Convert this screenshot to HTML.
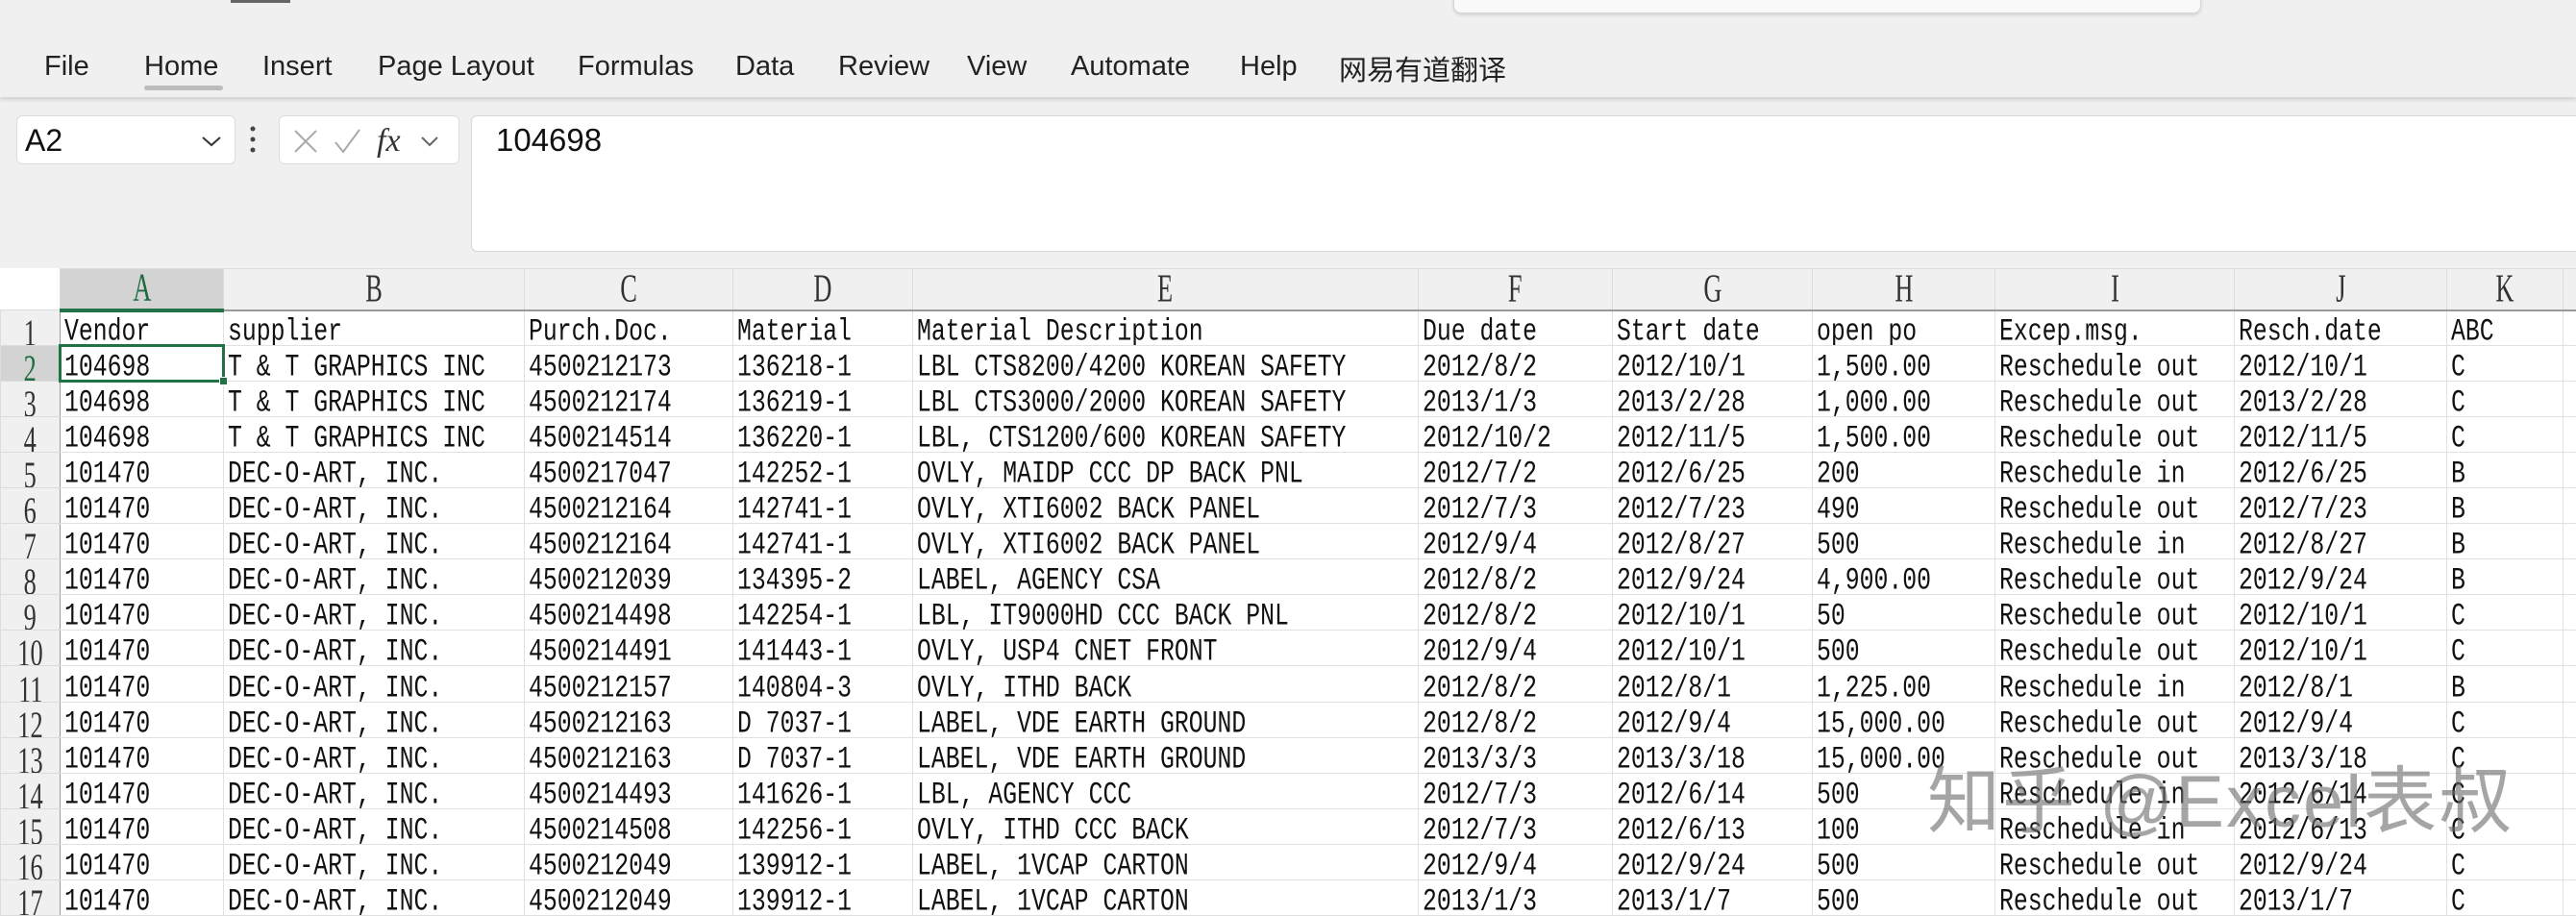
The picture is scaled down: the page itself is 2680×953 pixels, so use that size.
<!DOCTYPE html>
<html><head><meta charset="utf-8"><style>
*{margin:0;padding:0;box-sizing:border-box}
body{width:2680px;height:930px;overflow:hidden;background:#f0f0f0;position:relative;font-family:"Liberation Sans","Noto Sans CJK SC",sans-serif}
.search{position:absolute;left:1512px;top:-20px;width:778px;height:34px;background:#f9f9f9;border:1px solid #d6d6d6;border-radius:8px;box-shadow:0 2px 3px rgba(0,0,0,.12)}
.tiny{position:absolute;left:240px;top:0;width:62px;height:3px;background:#666}
.menu{position:absolute;top:0;left:0;width:2680px;height:101px;background:#f0f0f0;box-shadow:0 3px 4px rgba(0,0,0,.12)}
.menu span{position:absolute;top:53px;font-size:29px;color:#222}
.uline{position:absolute;left:150px;top:89px;width:82px;height:5px;border-radius:3px;background:#bcbcbc}
.nb{position:absolute;left:17px;top:120px;width:228px;height:51px;background:#fff;border:1px solid #dcdcdc;border-radius:6px}
.nb b{position:absolute;left:8px;top:7px;font-weight:normal;font-size:32px;color:#111}
.fxb{position:absolute;left:290px;top:120px;width:188px;height:51px;background:#fff;border:1px solid #dcdcdc;border-radius:6px}
.fbox{position:absolute;left:490px;top:120px;width:2200px;height:142px;background:#fff;border:1px solid #d8d8d8;border-radius:6px}
.fbox span{position:absolute;left:25px;top:3px;font-size:33px;color:#111;line-height:44px}
table{position:absolute;left:0;top:279px;width:2706px;border-collapse:collapse;table-layout:fixed;background:#fff;font-family:"Liberation Mono","Noto Sans CJK SC",monospace;font-size:24.8px;color:#111}
td{height:37.05px;border:1px solid #e1e1e1;white-space:nowrap;overflow:hidden;padding:0 0 0 4px;vertical-align:bottom;line-height:34px}
td i{font-style:normal;display:inline-block;position:relative;top:7px;transform:scale(1,1.3);transform-origin:0 80%}
tr.h td{height:43px;background:#f0f0f0;border-color:#dcdcdc;border-bottom:2px solid #9a9a9a;text-align:center;padding:0;font-family:"Liberation Serif",serif;font-size:33px;color:#333;line-height:40px}
tr.h td i{top:2px;transform:scale(.8,1.25);transform-origin:50% 80%}
td.rn{background:#f0f0f0;border-color:#dcdcdc;border-right:1px solid #9a9a9a;text-align:center;padding:0;font-family:"Liberation Serif",serif;font-size:33px;color:#333}
td.rn i{transform:scale(.8,1.2);transform-origin:50% 80%}
tr.h td.sel{background:#d3d3d3;color:#1d6b3e;border-bottom:4px solid #217346}
td.rsel{color:#1d6b3e!important;background:#d3d3d3!important}
.cur{position:absolute;left:61px;top:358px;width:173px;height:40px;border:3px solid #217346;pointer-events:none}
.cur:after{content:"";position:absolute;right:-6px;bottom:-6px;width:7px;height:7px;background:#217346;border:1px solid #fff}
.corner{position:absolute;left:0;top:279px;width:62px;height:43px;background:#f0f0f0}
.corner:after{content:"";position:absolute;right:4px;bottom:4px;border-left:36px solid transparent;border-bottom:36px solid #d6d6d6}
.wm{position:absolute;left:2005px;top:772px;font-size:76px;color:rgba(110,110,110,.62);font-family:"Liberation Sans","Noto Sans CJK SC",sans-serif;letter-spacing:2px;white-space:nowrap}
</style></head><body>
<div class="menu">
<span style="left:46px">File</span><span style="left:150px">Home</span><span style="left:273px">Insert</span><span style="left:393px">Page Layout</span><span style="left:601px">Formulas</span><span style="left:765px">Data</span><span style="left:872px">Review</span><span style="left:1006px">View</span><span style="left:1114px">Automate</span><span style="left:1290px">Help</span><span style="left:1393px;top:50px">网易有道翻译</span>
<div class="uline"></div>
</div>
<div class="tiny"></div>
<div class="search"></div>
<div class="nb"><b>A2</b>
<svg style="position:absolute;left:190px;top:18px" width="24" height="16"><path d="M3 4 L12 12 L21 4" fill="none" stroke="#333" stroke-width="2"/></svg></div>
<svg style="position:absolute;left:258px;top:128px" width="10" height="36"><circle cx="5" cy="6" r="2.5" fill="#444"/><circle cx="5" cy="17" r="2.5" fill="#444"/><circle cx="5" cy="28" r="2.5" fill="#444"/></svg>
<div class="fxb">
<svg style="position:absolute;left:8px;top:8px" width="175" height="36"><path d="M8 7 L30 29 M30 7 L8 29" stroke="#aaa" stroke-width="2" fill="none"/><path d="M50 19 L58 29 L75 6" stroke="#aaa" stroke-width="2" fill="none"/><text x="93" y="28" font-family="Liberation Serif" font-style="italic" font-size="34" fill="#333">fx</text><path d="M140 14 L148 22 L156 14" stroke="#666" stroke-width="2" fill="none"/></svg>
</div>
<div class="fbox"><span>104698</span></div>
<div class="corner"></div>
<table>
<colgroup><col style="width:62px"><col style="width:170px"><col style="width:313px"><col style="width:217px"><col style="width:187px"><col style="width:526px"><col style="width:202px"><col style="width:208px"><col style="width:190px"><col style="width:249px"><col style="width:221px"><col style="width:121px"><col style="width:40px"></colgroup>
<tr class="h"><td style="background:transparent;border:none"></td><td class="sel"><i>A</i></td><td><i>B</i></td><td><i>C</i></td><td><i>D</i></td><td><i>E</i></td><td><i>F</i></td><td><i>G</i></td><td><i>H</i></td><td><i>I</i></td><td><i>J</i></td><td><i>K</i></td><td></td></tr>
<tr><td class="rn"><i>1</i></td><td><i>Vendor</i></td><td><i>supplier</i></td><td><i>Purch.Doc.</i></td><td><i>Material</i></td><td><i>Material Description</i></td><td><i>Due date</i></td><td><i>Start date</i></td><td><i>open po</i></td><td><i>Excep.msg.</i></td><td><i>Resch.date</i></td><td><i>ABC</i></td><td></td></tr>
<tr><td class="rn rsel"><i>2</i></td><td><i>104698</i></td><td><i>T &amp; T GRAPHICS INC</i></td><td><i>4500212173</i></td><td><i>136218-1</i></td><td><i>LBL CTS8200/4200 KOREAN SAFETY</i></td><td><i>2012/8/2</i></td><td><i>2012/10/1</i></td><td><i>1,500.00</i></td><td><i>Reschedule out</i></td><td><i>2012/10/1</i></td><td><i>C</i></td><td></td></tr>
<tr><td class="rn"><i>3</i></td><td><i>104698</i></td><td><i>T &amp; T GRAPHICS INC</i></td><td><i>4500212174</i></td><td><i>136219-1</i></td><td><i>LBL CTS3000/2000 KOREAN SAFETY</i></td><td><i>2013/1/3</i></td><td><i>2013/2/28</i></td><td><i>1,000.00</i></td><td><i>Reschedule out</i></td><td><i>2013/2/28</i></td><td><i>C</i></td><td></td></tr>
<tr><td class="rn"><i>4</i></td><td><i>104698</i></td><td><i>T &amp; T GRAPHICS INC</i></td><td><i>4500214514</i></td><td><i>136220-1</i></td><td><i>LBL, CTS1200/600 KOREAN SAFETY</i></td><td><i>2012/10/2</i></td><td><i>2012/11/5</i></td><td><i>1,500.00</i></td><td><i>Reschedule out</i></td><td><i>2012/11/5</i></td><td><i>C</i></td><td></td></tr>
<tr><td class="rn"><i>5</i></td><td><i>101470</i></td><td><i>DEC-O-ART, INC.</i></td><td><i>4500217047</i></td><td><i>142252-1</i></td><td><i>OVLY, MAIDP CCC DP BACK PNL</i></td><td><i>2012/7/2</i></td><td><i>2012/6/25</i></td><td><i>200</i></td><td><i>Reschedule in</i></td><td><i>2012/6/25</i></td><td><i>B</i></td><td></td></tr>
<tr><td class="rn"><i>6</i></td><td><i>101470</i></td><td><i>DEC-O-ART, INC.</i></td><td><i>4500212164</i></td><td><i>142741-1</i></td><td><i>OVLY, XTI6002 BACK PANEL</i></td><td><i>2012/7/3</i></td><td><i>2012/7/23</i></td><td><i>490</i></td><td><i>Reschedule out</i></td><td><i>2012/7/23</i></td><td><i>B</i></td><td></td></tr>
<tr><td class="rn"><i>7</i></td><td><i>101470</i></td><td><i>DEC-O-ART, INC.</i></td><td><i>4500212164</i></td><td><i>142741-1</i></td><td><i>OVLY, XTI6002 BACK PANEL</i></td><td><i>2012/9/4</i></td><td><i>2012/8/27</i></td><td><i>500</i></td><td><i>Reschedule in</i></td><td><i>2012/8/27</i></td><td><i>B</i></td><td></td></tr>
<tr><td class="rn"><i>8</i></td><td><i>101470</i></td><td><i>DEC-O-ART, INC.</i></td><td><i>4500212039</i></td><td><i>134395-2</i></td><td><i>LABEL, AGENCY CSA</i></td><td><i>2012/8/2</i></td><td><i>2012/9/24</i></td><td><i>4,900.00</i></td><td><i>Reschedule out</i></td><td><i>2012/9/24</i></td><td><i>B</i></td><td></td></tr>
<tr><td class="rn"><i>9</i></td><td><i>101470</i></td><td><i>DEC-O-ART, INC.</i></td><td><i>4500214498</i></td><td><i>142254-1</i></td><td><i>LBL, IT9000HD CCC BACK PNL</i></td><td><i>2012/8/2</i></td><td><i>2012/10/1</i></td><td><i>50</i></td><td><i>Reschedule out</i></td><td><i>2012/10/1</i></td><td><i>C</i></td><td></td></tr>
<tr><td class="rn"><i>10</i></td><td><i>101470</i></td><td><i>DEC-O-ART, INC.</i></td><td><i>4500214491</i></td><td><i>141443-1</i></td><td><i>OVLY, USP4 CNET FRONT</i></td><td><i>2012/9/4</i></td><td><i>2012/10/1</i></td><td><i>500</i></td><td><i>Reschedule out</i></td><td><i>2012/10/1</i></td><td><i>C</i></td><td></td></tr>
<tr><td class="rn"><i>11</i></td><td><i>101470</i></td><td><i>DEC-O-ART, INC.</i></td><td><i>4500212157</i></td><td><i>140804-3</i></td><td><i>OVLY, ITHD BACK</i></td><td><i>2012/8/2</i></td><td><i>2012/8/1</i></td><td><i>1,225.00</i></td><td><i>Reschedule in</i></td><td><i>2012/8/1</i></td><td><i>B</i></td><td></td></tr>
<tr><td class="rn"><i>12</i></td><td><i>101470</i></td><td><i>DEC-O-ART, INC.</i></td><td><i>4500212163</i></td><td><i>D 7037-1</i></td><td><i>LABEL, VDE EARTH GROUND</i></td><td><i>2012/8/2</i></td><td><i>2012/9/4</i></td><td><i>15,000.00</i></td><td><i>Reschedule out</i></td><td><i>2012/9/4</i></td><td><i>C</i></td><td></td></tr>
<tr><td class="rn"><i>13</i></td><td><i>101470</i></td><td><i>DEC-O-ART, INC.</i></td><td><i>4500212163</i></td><td><i>D 7037-1</i></td><td><i>LABEL, VDE EARTH GROUND</i></td><td><i>2013/3/3</i></td><td><i>2013/3/18</i></td><td><i>15,000.00</i></td><td><i>Reschedule out</i></td><td><i>2013/3/18</i></td><td><i>C</i></td><td></td></tr>
<tr><td class="rn"><i>14</i></td><td><i>101470</i></td><td><i>DEC-O-ART, INC.</i></td><td><i>4500214493</i></td><td><i>141626-1</i></td><td><i>LBL, AGENCY CCC</i></td><td><i>2012/7/3</i></td><td><i>2012/6/14</i></td><td><i>500</i></td><td><i>Reschedule in</i></td><td><i>2012/6/14</i></td><td><i>C</i></td><td></td></tr>
<tr><td class="rn"><i>15</i></td><td><i>101470</i></td><td><i>DEC-O-ART, INC.</i></td><td><i>4500214508</i></td><td><i>142256-1</i></td><td><i>OVLY, ITHD CCC BACK</i></td><td><i>2012/7/3</i></td><td><i>2012/6/13</i></td><td><i>100</i></td><td><i>Reschedule in</i></td><td><i>2012/6/13</i></td><td><i>C</i></td><td></td></tr>
<tr><td class="rn"><i>16</i></td><td><i>101470</i></td><td><i>DEC-O-ART, INC.</i></td><td><i>4500212049</i></td><td><i>139912-1</i></td><td><i>LABEL, 1VCAP CARTON</i></td><td><i>2012/9/4</i></td><td><i>2012/9/24</i></td><td><i>500</i></td><td><i>Reschedule out</i></td><td><i>2012/9/24</i></td><td><i>C</i></td><td></td></tr>
<tr><td class="rn"><i>17</i></td><td><i>101470</i></td><td><i>DEC-O-ART, INC.</i></td><td><i>4500212049</i></td><td><i>139912-1</i></td><td><i>LABEL, 1VCAP CARTON</i></td><td><i>2013/1/3</i></td><td><i>2013/1/7</i></td><td><i>500</i></td><td><i>Reschedule out</i></td><td><i>2013/1/7</i></td><td><i>C</i></td><td></td></tr>
</table>
<div class="cur"></div>
<div class="wm">知乎 @Excel表叔</div>
</body></html>
